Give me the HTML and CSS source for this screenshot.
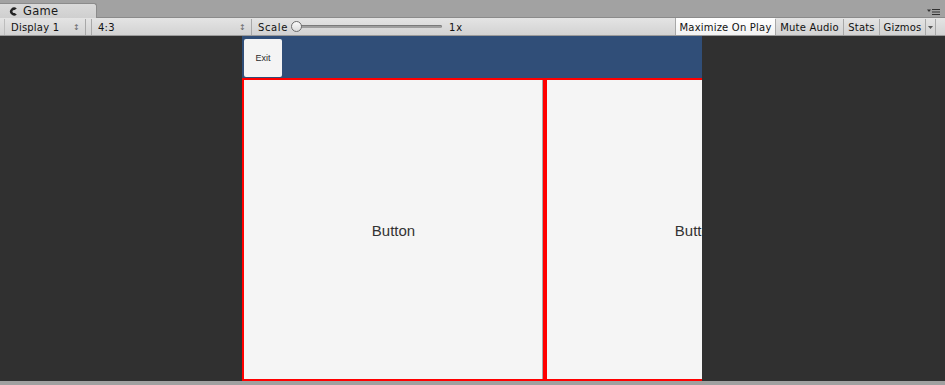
FILE: index.html
```html
<!DOCTYPE html>
<html>
<head>
<meta charset="utf-8">
<link rel="stylesheet" href="styles.css">
</head>
<body>
<div class="window">
  <div class="tabbar">
    <div class="tab">
      <svg class="tab-icon" width="9" height="9" viewBox="0 0 9 9"><path d="M7.8 1.6 A4 4 0 1 0 7.8 7.4 L5.6 6 A1.6 1.6 0 1 1 5.6 3 Z" fill="#222"/></svg>
      <span class="tab-label">Game</span>
    </div>
    <div class="tab-menu">
      <svg width="14" height="8" viewBox="0 0 14 8"><path d="M0 1.5 L4 1.5 L2 4 Z" fill="#333"/><rect x="5" y="1" width="8" height="1" fill="#333"/><rect x="5" y="3.5" width="8" height="1" fill="#333"/><rect x="5" y="6" width="8" height="1" fill="#333"/></svg>
    </div>
  </div>
  <div class="toolbar">
    <div class="popup popup-display"><span>Display 1</span><span class="updown">&#8597;</span></div>
    <div class="popup popup-aspect"><span>4:3</span><span class="updown">&#8597;</span></div>
    <div class="scale">
      <span class="scale-label">Scale</span>
      <div class="slider"><div class="track"></div><div class="knob"></div></div>
      <span class="scale-value">1x</span>
    </div>
    <div class="spacer"></div>
    <div class="tbtn tbtn-on">Maximize On Play</div>
    <div class="tbtn tbtn-mute">Mute Audio</div>
    <div class="tbtn tbtn-stats">Stats</div>
    <div class="tbtn tbtn-gizmos">Gizmos</div>
    <div class="tbtn tbtn-arrow"><svg width="5" height="3" viewBox="0 0 5 3"><path d="M0 0 L5 0 L2.5 3 Z" fill="#555"/></svg></div>
    <div class="tail"></div>
  </div>
  <div class="main">
    <div class="game">
      <div class="header">
        <div class="exit">Exit</div>
      </div>
      <div class="panels">
        <div class="panel panel-first"><span>Button</span></div>
        <div class="panel panel-second"><span>Button</span></div>
      </div>
    </div>
  </div>
  <div class="footer"></div>
</div>
</body>
</html>
```

FILE: styles.css
```css
html, body {
  margin: 0;
  padding: 0;
}
body {
  width: 945px;
  height: 385px;
  overflow: hidden;
  background: #a2a2a2;
  font-family: "DejaVu Sans", "Liberation Sans", sans-serif;
}
.window {
  display: flex;
  flex-direction: column;
  width: 945px;
  height: 385px;
}
.tabbar {
  height: 18px;
  display: flex;
  align-items: flex-end;
  background: #a2a2a2;
  box-sizing: border-box;
  border-bottom: 1px solid #8b8b8b;
}
.tab {
  width: 97px;
  height: 15px;
  margin-bottom: -1px;
  box-sizing: border-box;
  background: linear-gradient(#dadada, #cfcfcf);
  border: 1px solid #8b8b8b;
  border-left: none;
  border-bottom: none;
  border-radius: 0 3px 0 0;
  display: flex;
  align-items: center;
  padding-left: 9px;
  gap: 5px;
}
.tab-icon {
  display: block;
}
.tab-label {
  font-size: 11.5px;
  color: #1a1a1a;
  line-height: 14px;
  letter-spacing: 0.3px;
}
.tab-menu {
  margin-left: auto;
  margin-right: 4px;
  margin-bottom: 1px;
  height: 9px;
  display: flex;
  align-items: center;
}
.toolbar {
  height: 18px;
  box-sizing: border-box;
  display: flex;
  align-items: stretch;
  background: linear-gradient(#e4e4e4, #d2d2d2);
  border-bottom: 1px solid #9a9a9a;
  font-size: 10px;
  letter-spacing: 0.2px;
  color: #111;
  white-space: nowrap;
  padding-top: 1px;
}
.popup {
  display: flex;
  align-items: center;
  justify-content: space-between;
  box-sizing: border-box;
  border-right: 1px solid #a8a8a8;
  padding-left: 6px;
  padding-right: 5px;
}
.popup-display {
  margin-left: 4px;
  border-left: 1px solid #bdbdbd;
  width: 82px;
}
.popup-aspect {
  margin-left: 5px;
  border-left: 1px solid #a8a8a8;
  width: 161px;
}
.updown {
  font-size: 8px;
  color: #666;
}
.scale {
  display: flex;
  align-items: center;
  padding-left: 6px;
}
.scale-label {
  width: 33px;
  letter-spacing: 0.6px;
}
.slider {
  position: relative;
  width: 151px;
  height: 17px;
}
.track {
  position: absolute;
  left: 2px;
  right: 0;
  top: 6px;
  height: 3px;
  background: #9e9e9e;
  border-radius: 2px;
  box-shadow: inset 0 1px 0 #7a7a7a;
}
.knob {
  position: absolute;
  left: 0;
  top: 2px;
  width: 9px;
  height: 9px;
  border-radius: 50%;
  background: linear-gradient(#fafafa, #dcdcdc);
  border: 1px solid #6e6e6e;
}
.scale-value {
  margin-left: 7px;
  letter-spacing: 0.8px;
}
.spacer {
  flex: 1;
}
.tbtn {
  display: flex;
  align-items: center;
  justify-content: center;
  box-sizing: border-box;
  border-left: 1px solid #a8a8a8;
  padding: 0;
}
.tbtn-on {
  width: 100px;
  background: linear-gradient(#ffffff, #f2f2f2);
  margin-top: -1px;
  padding-top: 1px;
}
.tbtn-mute {
  width: 68px;
}
.tbtn-stats {
  width: 36px;
}
.tbtn-gizmos {
  width: 46px;
}
.tbtn-arrow {
  width: 11px;
  border-right: 1px solid #a8a8a8;
}
.tail {
  width: 9px;
}
.main {
  height: 345px;
  background: #303030;
  display: flex;
}
.game {
  margin-left: 242px;
  width: 460px;
  display: flex;
  flex-direction: column;
  overflow: hidden;
}
.header {
  height: 42px;
  background: #304e78;
  display: flex;
  align-items: flex-start;
  padding: 3px 0 0 2px;
  box-sizing: border-box;
}
.exit {
  width: 38px;
  height: 38px;
  background: #f4f4f4;
  border-radius: 2px;
  display: flex;
  align-items: center;
  justify-content: center;
  font-family: "Liberation Sans", Arial, sans-serif;
  font-size: 9px;
  color: #2a2a2a;
}
.panels {
  height: 303px;
  display: flex;
}
.panel {
  flex: 0 0 303px;
  box-sizing: border-box;
  border: 2px solid #ff0000;
  background: #f5f5f5;
  display: flex;
  align-items: center;
  justify-content: center;
  padding-top: 2px;
  font-family: "Liberation Sans", Arial, sans-serif;
  font-size: 15px;
  color: #333;
}
.panel-first {
  box-shadow: inset -1px 0 0 #a8a8a8;
}
.footer {
  height: 4px;
  background: #a0a0a0;
}
```
